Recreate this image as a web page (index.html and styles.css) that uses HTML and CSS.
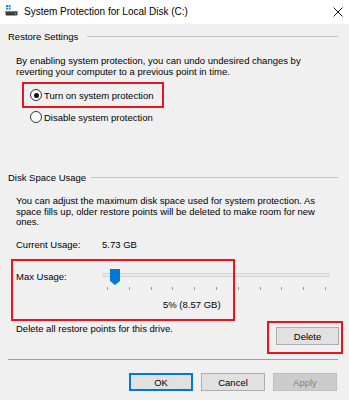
FILE: index.html
```html
<!DOCTYPE html>
<html>
<head>
<meta charset="utf-8">
<link rel="stylesheet" href="styles.css">
</head>
<body>
<div class="window">
  <div class="titlebar">
    <svg class="app-icon" width="20" height="24" viewBox="0 0 20 24">
      <rect x="6" y="5" width="2" height="2" fill="#1e90e0"/>
      <rect x="8.6" y="5" width="2" height="2" fill="#1e90e0"/>
      <rect x="6" y="7.6" width="2" height="2" fill="#1e90e0"/>
      <rect x="8.6" y="7.6" width="2" height="2" fill="#1e90e0"/>
      <rect x="5.5" y="11" width="12" height="4.5" rx="0.8" fill="#3a3a3a"/>
      <rect x="5.5" y="11" width="12" height="1.2" fill="#7a7a7a"/>
      <rect x="14.5" y="13.2" width="1.6" height="1" fill="#4cc94c"/>
    </svg>
    <span class="title">System Protection for Local Disk (C:)</span>
    <svg class="close" width="10" height="10" viewBox="0 0 10 10">
      <path d="M0.5 0.5 L9.5 9.5 M9.5 0.5 L0.5 9.5" stroke="#111" stroke-width="1" fill="none"/>
    </svg>
  </div>
  <div class="content">
    <div class="group-head"><span>Restore Settings</span><span class="rule"></span></div>
    <p class="desc">By enabling system protection, you can undo undesired changes by<br>reverting your computer to a previous point in time.</p>
    <div class="radio-row first"><span class="radio checked"></span><span>Turn on system protection</span></div>
    <div class="radio-row second"><span class="radio"></span><span>Disable system protection</span></div>
    <div class="group-head disk"><span>Disk Space Usage</span><span class="rule"></span></div>
    <p class="desc desc2">You can adjust the maximum disk space used for system protection. As<br>space fills up, older restore points will be deleted to make room for new<br>ones.</p>
    <div class="usage-row"><span class="label">Current Usage:</span><span>5.73 GB</span></div>
    <div class="slider-row">
      <span class="label slider-label">Max Usage:</span>
      <div class="slider">
        <div class="track"></div>
        <svg class="thumb" width="10" height="16" viewBox="0 0 10 16"><polygon points="0,0 10,0 10,12 5,16 0,12" fill="#0078d7"/></svg>
        <div class="ticks">
          <span class="tick end"></span><span class="tick"></span><span class="tick"></span><span class="tick"></span><span class="tick"></span><span class="tick"></span><span class="tick"></span><span class="tick"></span><span class="tick"></span><span class="tick"></span><span class="tick end"></span>
        </div>
      </div>
    </div>
    <div class="percent">5% (8.57 GB)</div>
    <div class="delete-row"><span>Delete all restore points for this drive.</span><button class="btn delete">Delete</button></div>
    <div class="separator"></div>
    <div class="actions">
      <button class="btn default">OK</button>
      <button class="btn">Cancel</button>
      <button class="btn disabled">Apply</button>
    </div>
  </div>
  <div class="mark mark-radio"></div>
  <div class="mark mark-usage"></div>
  <div class="mark mark-delete"></div>
</div>
</body>
</html>
```

FILE: styles.css
```css
* { box-sizing: border-box; }
html, body { margin: 0; padding: 0; }
body {
  background: #f0f0f0;
  font-family: "Liberation Sans", Arial, sans-serif;
  font-size: 9.5px;
  color: #000;
}
.window {
  position: relative;
  width: 349px;
  height: 400px;
  background: #f0f0f0;
  overflow: hidden;
}
.titlebar {
  height: 24px;
  background: #fff;
  display: flex;
  align-items: center;
}
.app-icon { display: block; flex: none; }
.title {
  margin-left: 4px;
  font-size: 10px;
  line-height: 12px;
}
.close {
  display: block;
  margin-left: auto;
  margin-right: 6px;
}
.content {
  padding: 7px 11px 0 8px;
}
.group-head {
  display: flex;
  align-items: flex-start;
  line-height: 11px;
  height: 11px;
}
.group-head .rule {
  flex: 1;
  height: 1px;
  margin-top: 5px;
  margin-left: 9px;
  background: #c4c4c4;
}
.group-head.disk { margin-top: 49px; }
.group-head.disk .rule { margin-left: 5px; }
.desc {
  margin: 13px 0 0 8px;
  line-height: 11px;
  white-space: nowrap;
}
.desc2 { line-height: 10.7px; }
.radio-row {
  display: flex;
  align-items: center;
  gap: 2px;
  height: 12px;
  margin-left: 22px;
}
.radio-row.first { margin-top: 12px; }
.radio-row.second { margin-top: 10px; }
.radio {
  width: 12px;
  height: 12px;
  border: 1px solid #333;
  border-radius: 50%;
  background: #fff;
  position: relative;
  flex: none;
}
.radio.checked::after {
  content: "";
  position: absolute;
  left: 2.5px;
  top: 2.5px;
  width: 5px;
  height: 5px;
  border-radius: 50%;
  background: #111;
}
.usage-row {
  display: flex;
  margin: 11px 0 0 8px;
  line-height: 11px;
}
.label { width: 86px; flex: none; }
.slider-row {
  display: flex;
  align-items: flex-start;
  margin: 17px 0 0 8px;
}
.slider-label { width: 87px; margin-top: 4px; line-height: 11px; }
.slider {
  position: relative;
  width: 226px;
  flex: none;
}
.track {
  margin-top: 6px;
  height: 4px;
  background: #e7e7e7;
  border: 1px solid #d6d6d6;
}
.thumb {
  position: absolute;
  left: 7px;
  top: 2px;
  display: block;
}
.ticks {
  display: flex;
  justify-content: space-between;
  margin-top: 10px;
  padding: 0 3px 0 4px;
  height: 3px;
}
.tick {
  width: 1px;
  height: 3px;
  background: #9a9a9a;
}
.percent {
  margin: 9px 0 0 155px;
  line-height: 11px;
}
.delete-row {
  display: flex;
  justify-content: space-between;
  align-items: flex-start;
  margin: 13px 0 0 8px;
  line-height: 11px;
}
.btn {
  font-family: "Liberation Sans", Arial, sans-serif;
  font-size: 9.5px;
  color: #000;
  height: 18px;
  width: 64px;
  padding: 0;
  background: #e1e1e1;
  border: 1px solid #adadad;
  display: inline-flex;
  align-items: center;
  justify-content: center;
}
.btn.delete {
  width: 63px;
  margin-top: 4px;
  margin-right: -1px;
}
.btn.default { border: 2px solid #0078d7; }
.btn.disabled {
  background: #cccccc;
  border-color: #bfbfbf;
  color: #838383;
}
.separator {
  margin-top: 14px;
  height: 1px;
  background: #a0a0a0;
}
.actions {
  display: flex;
  justify-content: flex-end;
  gap: 8px;
  margin-top: 13px;
  margin-right: 1px;
}
.mark {
  position: absolute;
  border: 2px solid #e8151f;
}
.mark-radio { left: 22px; top: 82px; width: 142px; height: 26px; }
.mark-usage { left: 11px; top: 259px; width: 224px; height: 62px; }
.mark-delete { left: 267px; top: 321px; width: 76px; height: 33px; }
```
